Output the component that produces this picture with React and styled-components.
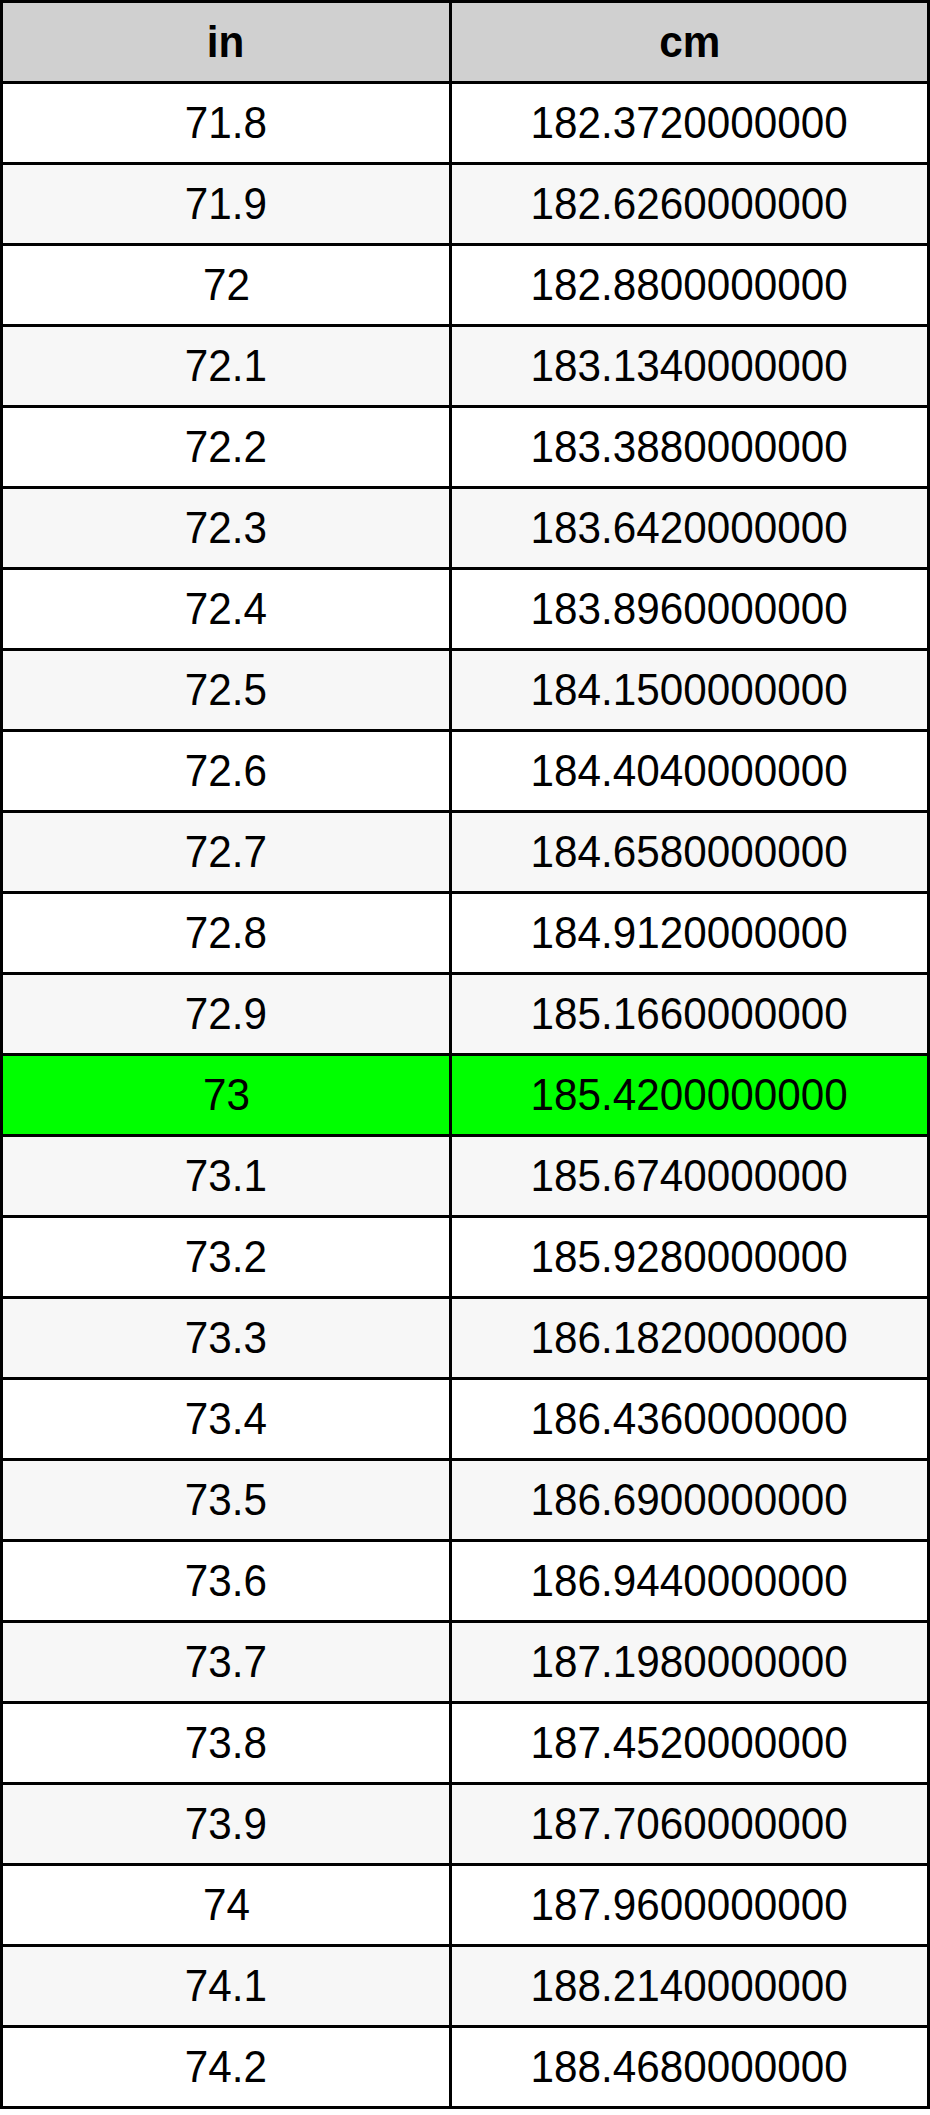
import React from 'react';
import styled, { createGlobalStyle } from 'styled-components';

const GlobalStyle = createGlobalStyle`
  html, body {
    margin: 0;
    padding: 0;
    background: #fff;
  }
`;

const rows = [
  ['71.8', '182.3720000000'],
  ['71.9', '182.6260000000'],
  ['72', '182.8800000000'],
  ['72.1', '183.1340000000'],
  ['72.2', '183.3880000000'],
  ['72.3', '183.6420000000'],
  ['72.4', '183.8960000000'],
  ['72.5', '184.1500000000'],
  ['72.6', '184.4040000000'],
  ['72.7', '184.6580000000'],
  ['72.8', '184.9120000000'],
  ['72.9', '185.1660000000'],
  ['73', '185.4200000000'],
  ['73.1', '185.6740000000'],
  ['73.2', '185.9280000000'],
  ['73.3', '186.1820000000'],
  ['73.4', '186.4360000000'],
  ['73.5', '186.6900000000'],
  ['73.6', '186.9440000000'],
  ['73.7', '187.1980000000'],
  ['73.8', '187.4520000000'],
  ['73.9', '187.7060000000'],
  ['74', '187.9600000000'],
  ['74.1', '188.2140000000'],
  ['74.2', '188.4680000000'],
];

const Table = styled.div`
  display: grid;
  grid-template-columns: 446px 475px;
  grid-auto-rows: 78px;
  gap: 3px;
  padding: 3px;
  width: 930px;
  box-sizing: border-box;
  background: #000;
  font-family: "Liberation Sans", Arial, sans-serif;
`;

const Cell = styled.div`
  display: flex;
  align-items: center;
  justify-content: center;
  font-size: 44px;
  color: #000;
  background: ${p => p.$bg};
  font-weight: ${p => (p.$head ? 'bold' : 'normal')};
`;

// the reference glyphs are a touch narrower than Arial
const Text = styled.span`
  display: inline-block;
  transform: scaleX(0.96);
`;

const bgFor = (i, value) => {
  if (value === '73') return '#00ff00';
  return i % 2 === 0 ? '#ffffff' : '#f7f7f7';
};

export default function App() {
  return (
    <>
      <GlobalStyle />
      <Table>
        <Cell $head $bg="#d0d0d0"><Text>in</Text></Cell>
        <Cell $head $bg="#d0d0d0"><Text>cm</Text></Cell>
        {rows.map(([inch, cm], i) => (
          <React.Fragment key={inch}>
            <Cell $bg={bgFor(i, inch)}><Text>{inch}</Text></Cell>
            <Cell $bg={bgFor(i, inch)}><Text>{cm}</Text></Cell>
          </React.Fragment>
        ))}
      </Table>
    </>
  );
}
